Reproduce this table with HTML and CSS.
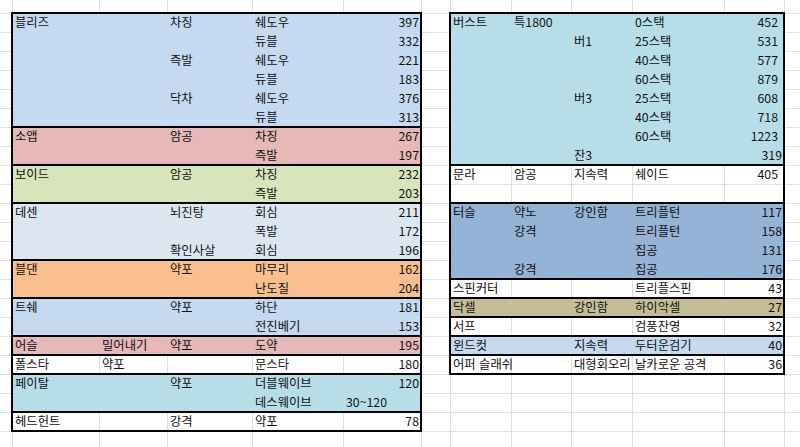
FILE: index.html
```html
<!DOCTYPE html>
<html lang="ko">
<head>
<meta charset="utf-8">
<title>Sheet</title>
<link rel="stylesheet" href="styles.css">
</head>
<body>
<div class="sheet">
  <div class="tbl left">
    <div class="sec blue">
      <span>블리즈</span><span></span><span>차징</span><span>쉐도우</span><span class="n">397</span>
      <span></span><span></span><span></span><span>듀블</span><span class="n">332</span>
      <span></span><span></span><span>즉발</span><span>쉐도우</span><span class="n">221</span>
      <span></span><span></span><span></span><span>듀블</span><span class="n">183</span>
      <span></span><span></span><span>닥차</span><span>쉐도우</span><span class="n">376</span>
      <span></span><span></span><span></span><span>듀블</span><span class="n">313</span>
    </div>
    <div class="sec pink">
      <span>소앱</span><span></span><span>암공</span><span>차징</span><span class="n">267</span>
      <span></span><span></span><span></span><span>즉발</span><span class="n">197</span>
    </div>
    <div class="sec green">
      <span>보이드</span><span></span><span>암공</span><span>차징</span><span class="n">232</span>
      <span></span><span></span><span></span><span>즉발</span><span class="n">203</span>
    </div>
    <div class="sec pale">
      <span>데센</span><span></span><span>뇌진탕</span><span>회심</span><span class="n">211</span>
      <span></span><span></span><span></span><span>폭발</span><span class="n">172</span>
      <span></span><span></span><span>확인사살</span><span>회심</span><span class="n">196</span>
    </div>
    <div class="sec orange">
      <span>블댄</span><span></span><span>약포</span><span>마무리</span><span class="n">162</span>
      <span></span><span></span><span></span><span>난도질</span><span class="n">204</span>
    </div>
    <div class="sec blue">
      <span>트쉐</span><span></span><span>약포</span><span>하단</span><span class="n">181</span>
      <span></span><span></span><span></span><span>전진베기</span><span class="n">153</span>
    </div>
    <div class="sec pink">
      <span>어슬</span><span>밀어내기</span><span>약포</span><span>도약</span><span class="n">195</span>
    </div>
    <div class="sec">
      <span>폴스타</span><span>약포</span><span></span><span>문스타</span><span class="n">180</span>
    </div>
    <div class="sec aqua">
      <span>페이탈</span><span></span><span>약포</span><span>더블웨이브</span><span class="n">120</span>
      <span></span><span></span><span></span><span>데스웨이브</span><span>30~120</span>
    </div>
    <div class="sec">
      <span>헤드헌트</span><span></span><span>강격</span><span>약포</span><span class="n">78</span>
    </div>
  </div>

  <div class="tbl right">
    <div class="sec aqua">
      <span>버스트</span><span>특1800</span><span></span><span>0스택</span><span class="n wide">452</span>
      <span></span><span></span><span>버1</span><span>25스택</span><span class="n wide">531</span>
      <span></span><span></span><span></span><span>40스택</span><span class="n wide">577</span>
      <span></span><span></span><span></span><span>60스택</span><span class="n wide">879</span>
      <span></span><span></span><span>버3</span><span>25스택</span><span class="n wide">608</span>
      <span></span><span></span><span></span><span>40스택</span><span class="n wide">718</span>
      <span></span><span></span><span></span><span>60스택</span><span class="n wide">1223</span>
      <span></span><span></span><span>잔3</span><span></span><span class="n">319</span>
    </div>
    <div class="sec">
      <span>문라</span><span>암공</span><span>지속력</span><span>쉐이드</span><span class="n wide">405</span>
      <span></span><span></span><span></span><span></span><span></span>
    </div>
    <div class="sec steel">
      <span>터슬</span><span>약노</span><span>강인함</span><span>트리플턴</span><span class="n">117</span>
      <span></span><span>강격</span><span></span><span>트리플턴</span><span class="n">158</span>
      <span></span><span></span><span></span><span>집공</span><span class="n">131</span>
      <span></span><span>강격</span><span></span><span>집공</span><span class="n">176</span>
    </div>
    <div class="sec">
      <span>스핀커터</span><span></span><span></span><span>트리플스핀</span><span class="n">43</span>
    </div>
    <div class="sec tan">
      <span>닥셀</span><span></span><span>강인함</span><span>하이악셀</span><span class="n">27</span>
    </div>
    <div class="sec">
      <span>서프</span><span></span><span></span><span>검풍잔영</span><span class="n">32</span>
    </div>
    <div class="sec blue">
      <span>윈드컷</span><span></span><span>지속력</span><span>두터운검기</span><span class="n">40</span>
    </div>
    <div class="sec">
      <span class="ov">어퍼 슬래쉬</span><span></span><span>대형회오리</span><span>날카로운 공격</span><span class="n">36</span>
    </div>
  </div>
</div>
</body>
</html>
```

FILE: styles.css
```css
html, body {
  margin: 0;
  padding: 0;
}

body {
  width: 800px;
  height: 447px;
  overflow: hidden;
  background: #ffffff;
  font-family: "Noto Sans CJK KR", "Noto Sans", sans-serif;
  font-size: 12.3px;
  color: #111111;
}

.sheet {
  display: grid;
  grid-template-columns: 12px 87px 68px 85px 91px 78px 29px 61px 60px 61px 92px 60px 40px;
  grid-template-rows: 13px repeat(23, 19px);
  width: 800px;
  height: 447px;
  overflow: hidden;
  background-color: #ffffff;
  background-image:
    repeating-linear-gradient(to bottom, #dcdfe6 0, #dcdfe6 1px, transparent 1px, transparent 19px),
    linear-gradient(#dcdfe6, #dcdfe6),
    linear-gradient(#dcdfe6, #dcdfe6),
    linear-gradient(#dcdfe6, #dcdfe6),
    linear-gradient(#dcdfe6, #dcdfe6),
    linear-gradient(#dcdfe6, #dcdfe6),
    linear-gradient(#dcdfe6, #dcdfe6),
    linear-gradient(#dcdfe6, #dcdfe6),
    linear-gradient(#dcdfe6, #dcdfe6),
    linear-gradient(#dcdfe6, #dcdfe6),
    linear-gradient(#dcdfe6, #dcdfe6),
    linear-gradient(#dcdfe6, #dcdfe6),
    linear-gradient(#dcdfe6, #dcdfe6);
  background-size:
    100% 100%,
    1px 100%, 1px 100%, 1px 100%, 1px 100%, 1px 100%, 1px 100%,
    1px 100%, 1px 100%, 1px 100%, 1px 100%, 1px 100%, 1px 100%;
  background-position:
    0 13px,
    12px 0, 99px 0, 167px 0, 252px 0, 343px 0, 421px 0,
    450px 0, 511px 0, 571px 0, 632px 0, 724px 0, 784px 0;
  background-repeat: no-repeat;
}

.tbl {
  display: flex;
  flex-direction: column;
  align-self: start;
}

.left {
  grid-column: 2 / 7;
  grid-row: 2 / 24;
}

.right {
  grid-column: 8 / 13;
  grid-row: 2 / 21;
}

.sec {
  display: grid;
  grid-auto-rows: 19px;
  box-shadow: 0 0 0 1px #000000, inset 0 0 0 1px #000000;
}

.left .sec {
  grid-template-columns: 87px 68px 85px 91px 78px;
}

.right .sec {
  grid-template-columns: 61px 60px 61px 92px 60px;
}

.sec > span {
  display: block;
  padding: 0 2px 0 3px;
  line-height: 19px;
  white-space: nowrap;
  overflow: hidden;
}

.sec > span.n {
  text-align: right;
}

.sec > span.wide {
  padding-right: 6px;
}

.sec > span.ov {
  overflow: visible;
  position: relative;
  z-index: 1;
}

.blue   { background-color: #c5d9f1; }
.pink   { background-color: #e6b8b7; }
.green  { background-color: #d8e4bc; }
.pale   { background-color: #dce6f1; }
.orange { background-color: #fabf8f; }
.aqua   { background-color: #b7dee8; }
.steel  { background-color: #95b3d7; }
.tan    { background-color: #c4bd97; }
```
